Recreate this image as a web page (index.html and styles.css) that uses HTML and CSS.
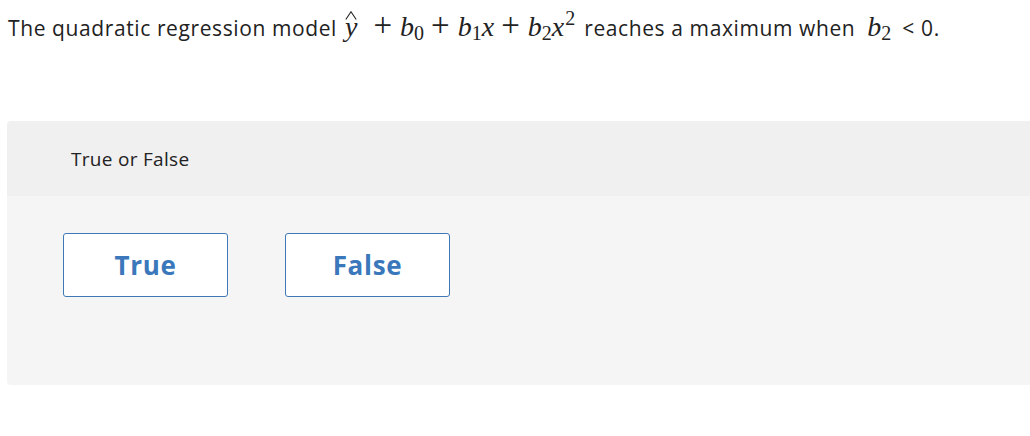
FILE: index.html
```html
<!DOCTYPE html>
<html>
<head>
<meta charset="utf-8">
<link rel="stylesheet" href="styles.css">
</head>
<body>
<p class="question">The quadratic regression model <span class="math"><span class="hatwrap"><i>y</i><svg class="hat" width="12" height="9" viewBox="0 0 12 9"><path d="M0.8 8.5 L6 0.8 L11.2 8.5" fill="none" stroke="#222" stroke-width="1.1"/></svg></span><span class="op lead">+</span><i>b</i><sub>0</sub><span class="op">+</span><i>b</i><sub>1</sub><i>x</i><span class="op">+</span><i>b</i><sub>2</sub><i>x</i><sup>2</sup></span> reaches a maximum when <span class="math tail"><i>b</i><sub>2</sub></span> &lt; 0.</p>
<div class="panel">
  <div class="panel-head">True or False</div>
  <div class="panel-body">
    <button class="choice">True</button>
    <button class="choice">False</button>
  </div>
</div>
</body>
</html>
```
FILE: styles.css
```css
body {
  margin: 0;
  background: #fff;
  font-family: "Open Sans", Lato, sans-serif;
  color: #222;
}
.question {
  margin: 0;
  padding: 12px 0 0 8px;
  font-size: 21px;
  letter-spacing: 0.6px;
  line-height: 30px;
  white-space: nowrap;
}
.math {
  font-family: "Liberation Serif", "DejaVu Serif", serif;
  font-size: 28px;
  letter-spacing: 0;
  margin-left: 2px;
}
.math.tail { margin-left: 6px; margin-right: 5px; }
.math i { font-style: italic; }
.math sub, .math sup { font-size: 20px; line-height: 0; font-style: normal; }
.math sub { vertical-align: -4px; }
.math sup { vertical-align: 11px; margin-left: 1px; margin-right: 3px; }
.hatwrap {
  position: relative;
  display: inline-block;
}
.hat {
  position: absolute;
  left: 0;
  top: -1px;
}
.op {
  display: inline-block;
  font-size: 33px;
  line-height: 0;
  margin: 0 8px 0 7px;
  font-style: normal;
}
.op.lead { margin-left: 16px; }
.panel {
  margin: 78px 0 0 7px;
  border-radius: 4px 0 0 4px;
  overflow: hidden;
}
.panel-head {
  background: #f0f0f0;
  height: 75px;
  padding-left: 64px;
  display: flex;
  align-items: center;
  font-size: 19px;
  letter-spacing: 0.3px;
}
.panel-body {
  background: #f5f5f5;
  height: 189px;
  padding: 37px 0 0 56px;
  box-sizing: border-box;
  display: flex;
  gap: 57px;
  align-items: flex-start;
}
.choice {
  width: 165px;
  height: 64px;
  background: #fff;
  border: 1px solid #3e78b7;
  border-radius: 3px;
  color: #3a78bb;
  font-family: "Open Sans", sans-serif;
  font-weight: 700;
  font-size: 26px;
  letter-spacing: 0.7px;
  padding: 0;
}
```
